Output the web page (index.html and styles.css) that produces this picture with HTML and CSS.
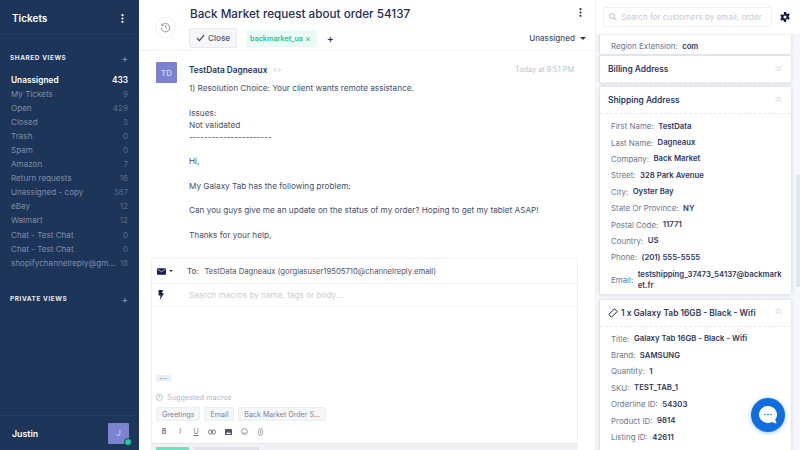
FILE: index.html
```html
<!DOCTYPE html>
<html lang="en">
<head>
<meta charset="utf-8">
<title>Tickets</title>
<link rel="stylesheet" href="styles.css">
</head>
<body>
<div class="app">
  <aside class="side">
    <div class="side-head"><span class="side-title">Tickets</span>
      <svg class="kebab" width="3" height="9" viewBox="0 0 3 9"><circle cx="1.5" cy="1.2" r="1.1"/><circle cx="1.5" cy="4.5" r="1.1"/><circle cx="1.5" cy="7.8" r="1.1"/></svg>
    </div>
    <div class="sec-head first"><span>SHARED VIEWS</span><span class="plus">+</span></div>
    <ul class="views">
      <li class="active"><span>Unassigned</span><span>433</span></li>
      <li><span>My Tickets</span><span class="n">9</span></li>
      <li><span>Open</span><span class="n">429</span></li>
      <li><span>Closed</span><span class="n">3</span></li>
      <li><span>Trash</span><span class="n">0</span></li>
      <li><span>Spam</span><span class="n">0</span></li>
      <li><span>Amazon</span><span class="n">7</span></li>
      <li><span>Return requests</span><span class="n">16</span></li>
      <li><span>Unassigned - copy</span><span class="n">387</span></li>
      <li><span>eBay</span><span class="n">12</span></li>
      <li><span>Walmart</span><span class="n">12</span></li>
      <li><span>Chat - Test Chat</span><span class="n">0</span></li>
      <li><span>Chat - Test Chat</span><span class="n">0</span></li>
      <li><span class="trunc">shopifychannelreply@gm...</span><span class="n">18</span></li>
    </ul>
    <div class="sec-head"><span>PRIVATE VIEWS</span><span class="plus">+</span></div>
    <div class="side-foot"><span class="user">Justin</span>
      <span class="avatar-j">J<i class="dot"></i></span>
    </div>
  </aside>

  <main class="main">
    <header class="head">
      <div class="hist"><svg width="11" height="11" viewBox="0 0 12 12" fill="none" stroke="#8a8fa3" stroke-width="1"><path d="M2.2 3.6A4.6 4.6 0 1 1 1.4 6"/><path d="M2 1.6v2.2h2.2"/><path d="M6 3.6V6l1.6 1"/></svg></div>
      <div class="head-body">
        <div class="head-top"><h1>Back Market request about order 54137</h1>
          <svg class="kebab dark" width="3" height="9" viewBox="0 0 3 9"><circle cx="1.5" cy="1.2" r="1.1"/><circle cx="1.5" cy="4.5" r="1.1"/><circle cx="1.5" cy="7.8" r="1.1"/></svg>
        </div>
        <div class="head-row">
          <button class="close"><svg width="9" height="8" viewBox="0 0 9 8" fill="none" stroke="#2f3a5a" stroke-width="1.1"><path d="M1 4.2l2.4 2.4L8 1.2"/></svg>Close</button>
          <span class="tag">backmarket_us <b>×</b></span>
          <span class="add">+</span>
          <span class="assign">Unassigned<i class="caret"></i></span>
        </div>
      </div>
    </header>
    <section class="msg">
      <div class="avatar">TD</div>
      <div class="msg-body">
        <div class="msg-top"><span class="from">TestData Dagneaux</span><span class="code">&lt;&gt;</span><span class="time">Today at 9:51 PM</span></div>
        <p>1) Resolution Choice: Your client wants remote assistance.</p>
        <p class="gap">Issues:<br>Not validated<br>----------------------</p>
        <p class="gap">Hi,</p>
        <p class="gap">My Galaxy Tab has the following problem:</p>
        <p class="gap">Can you guys give me an update on the status of my order? Hoping to get my tablet ASAP!</p>
        <p class="gap">Thanks for your help,</p>
      </div>
    </section>
    <section class="reply">
      <div class="reply-row to">
        <svg class="mail" width="9" height="7" viewBox="0 0 11 8"><rect width="11" height="8" rx="1" fill="#141f4a"/><path d="M.8 1.2l4.700 3.200 4.700-3.200" fill="none" stroke="#fff" stroke-width=".8"/></svg><i class="caret small"></i>
        <span class="to-l">To:</span><span>TestData Dagneaux (gorgiasuser19505710@channelreply.email)</span>
      </div>
      <div class="reply-row macro">
        <svg class="bolt" width="6" height="10" viewBox="0 0 6 10"><path d="M.6 0h4.600L3.800 3.200H6L1.800 10l.8-4.600H.6z" fill="#141f4a"/></svg>
        <span>Search macros by name, tags or body...</span>
      </div>
      <div class="editor">
        <span class="more">•••</span>
        <div class="sugg"><svg width="7" height="7" viewBox="0 0 8 8" fill="none" stroke="#9aa0b2" stroke-width=".8"><circle cx="4" cy="4" r="3.400"/><path d="M4 2v2.400"/></svg>Suggested macros</div>
        <div class="chips"><span>Greetings</span><span>Email</span><span>Back Market Order S...</span></div>
        <div class="tools">
          <span class="tool"><b>B</b></span><span class="tool"><em>I</em></span><span class="tool"><u>U</u></span>
          <span class="tool"><svg width="8" height="6" viewBox="0 0 8 6" fill="none" stroke="#6d7488" stroke-width=".9"><rect x=".5" y="1" width="4" height="4" rx="2"/><rect x="3.500" y="1" width="4" height="4" rx="2"/></svg></span>
          <span class="tool"><svg width="7" height="6" viewBox="0 0 7 6"><rect width="7" height="6" rx=".6" fill="#4f5873"/><path d="M1 5l1.800-2 1.200 1.200 1-.8L6 5z" fill="#fff"/></svg></span>
          <span class="tool"><svg width="7" height="7" viewBox="0 0 8 8" fill="none" stroke="#6d7488" stroke-width=".8"><circle cx="4" cy="4" r="3.400"/><path d="M2.400 5c1 1 2.200 1 3.200 0M2.800 3h.4M4.800 3h.4"/></svg></span>
          <span class="tool"><svg width="5" height="8" viewBox="0 0 5 8" fill="none" stroke="#8a90a2" stroke-width=".8"><rect x=".6" y=".5" width="3.800" height="7" rx="1.900"/><path d="M2.500 2v3.600"/></svg></span>
        </div>
      </div>
      <div class="send"><span class="send-a"></span><span class="send-b"></span></div>
    </section>
  </main>

  <aside class="right">
    <div class="search-bar">
      <label class="search"><svg width="8" height="8" viewBox="0 0 8 8" fill="none" stroke="#b9bccb" stroke-width="1"><circle cx="3.200" cy="3.200" r="2.500"/><path d="M5 5l2.500 2.500"/></svg><span>Search for customers by email, order</span></label>
      <svg class="gear" width="10" height="10" viewBox="0 0 10 10"><path d="M4 0h2l.3 1.400 1 .5L8.600 1.200l1.200 1.600-1 1v1.400l1 1-1.200 1.600-1.300-.7-1 .5L6 10H4l-.3-1.400-1-.5-1.300.7L.2 7.200l1-1V4.800l-1-1L1.400 2.200l1.300.7 1-.5z" fill="#141f4a"/><circle cx="5" cy="5" r="1.500" fill="#fff"/></svg>
    </div>
    <div class="scroll">
      <div class="card top">
        <div class="f"><span>Region Extension:</span><b>com</b></div>
      </div>
      <div class="card billing">
        <div class="c-head"><span>Billing Address</span><svg class="chev" width="7" height="7" viewBox="0 0 7 7" fill="none" stroke="#c3c6d4" stroke-width=".8"><path d="M.5 .8l3 2.400 3-2.400M.5 3.600l3 2.400 3-2.400"/></svg></div>
      </div>
      <div class="card shadow">
        <div class="c-head"><span>Shipping Address</span><svg class="chev" width="7" height="7" viewBox="0 0 7 7" fill="none" stroke="#c3c6d4" stroke-width=".8"><path d="M.5 3.200l3-2.400 3 2.400M.5 6l3-2.400 3 2.400"/></svg></div>
        <div class="fields">
          <div class="f"><span>First Name:</span><b>TestData</b></div>
          <div class="f"><span>Last Name:</span><b>Dagneaux</b></div>
          <div class="f"><span>Company:</span><b>Back Market</b></div>
          <div class="f"><span>Street:</span><b>328 Park Avenue</b></div>
          <div class="f"><span>City:</span><b>Oyster Bay</b></div>
          <div class="f"><span>State Or Province:</span><b>NY</b></div>
          <div class="f"><span>Postal Code:</span><b>11771</b></div>
          <div class="f"><span>Country:</span><b>US</b></div>
          <div class="f"><span>Phone:</span><b>(201) 555-5555</b></div>
          <div class="f email"><span>Email:</span><b>testshipping_37473_54137@backmark<br>et.fr</b></div>
        </div>
      </div>
      <div class="card last">
        <div class="c-head prod"><svg width="10" height="10" viewBox="0 0 10 10" fill="none" stroke="#141f4a" stroke-width="1"><path d="M6.500 .8l2.700 2.700-5.700 5.700L.8 6.500z"/><path d="M6 3h.1M7 4h.1"/></svg><span>1 x Galaxy Tab 16GB - Black - Wifi</span><svg class="chev" width="7" height="7" viewBox="0 0 7 7" fill="none" stroke="#c3c6d4" stroke-width=".8"><path d="M.5 3.200l3-2.400 3 2.400M.5 6l3-2.400 3 2.400"/></svg></div>
        <div class="fields">
          <div class="f"><span>Title:</span><b>Galaxy Tab 16GB - Black - Wifi</b></div>
          <div class="f"><span>Brand:</span><b>SAMSUNG</b></div>
          <div class="f"><span>Quantity:</span><b>1</b></div>
          <div class="f"><span>SKU:</span><b>TEST_TAB_1</b></div>
          <div class="f"><span>Orderline ID:</span><b>54303</b></div>
          <div class="f"><span>Product ID:</span><b>9814</b></div>
          <div class="f"><span>Listing ID:</span><b>42611</b></div>
        </div>
      </div>
    </div>
    <div class="sbar"></div>
    <div class="fab"><svg width="20" height="18" viewBox="0 0 20 18"><path d="M10 0c5 0 9 3.800 9 8.500 0 1.900-.7 3.600-1.800 5l1.300 3.300c.2.500-.2.800-.7.600l-3.800-1.300A9.500 9.500 0 0 1 10 17c-5 0-9-3.800-9-8.500S5 0 10 0z" fill="#fff"/><circle cx="7" cy="8.500" r=".8" fill="#0f6fe0"/><circle cx="10" cy="8.500" r=".8" fill="#0f6fe0"/><circle cx="13" cy="8.500" r=".8" fill="#0f6fe0"/></svg></div>
  </aside>
</div>
</body>
</html>
```
FILE: styles.css
```css
* { box-sizing: border-box; }
html, body { margin: 0; height: 100%; overflow: hidden; }
body { font-family: Inter, "Liberation Sans", sans-serif; font-size: 8.2px; color: #3b4468; background: #fff; }
.app { display: flex; width: 800px; height: 450px; overflow: hidden; }

/* sidebar */
.side { width: 139px; flex: none; background: #1c3558; color: #fff; display: flex; flex-direction: column; }
.side-head { height: 35px; display: flex; align-items: center; justify-content: space-between; padding: 2px 15px 0 12px; border-bottom: 1px solid #223c60; font-size: 10px; font-weight: 600; }
.side-title { color: #fff; }
.kebab { fill: #fff; }
.kebab.dark { fill: #2b3558; margin-top: -3px; }
.sec-head { display: flex; justify-content: space-between; align-items: center; padding: 0 11px 0 10px; font-size: 6.4px; font-weight: 700; letter-spacing: .6px; color: #e8ecf3; height: 12px; margin-top: 23.5px; }
.sec-head.first { margin-top: 17px; }
.plus { font-size: 10px; font-weight: 400; color: #8d9ab1; letter-spacing: 0; }
.views { list-style: none; margin: 8.5px 0 0; padding: 0 11px; }
.views li { height: 14.1px; display: flex; align-items: center; justify-content: space-between; color: #7e8ea7; font-size: 8.1px; white-space: nowrap; }
.views li.active { color: #fff; font-weight: 600; font-size: 8.3px; }
.views .n { color: #566c8c; }
.side-foot { margin-top: auto; height: 35px; display: flex; align-items: center; justify-content: space-between; padding: 0 10px 0 12px; border-top: 1px solid #223c60; font-size: 8.8px; font-weight: 600; }
.user { color: #fff; }
.avatar-j { position: relative; width: 21px; height: 21px; background: #7b82d0; color: #c9cbee; font-size: 8px; font-weight: 500; display: flex; align-items: center; justify-content: center; border-radius: 1px; }
.dot { position: absolute; right: -3px; bottom: -2.5px; width: 8px; height: 8px; border-radius: 50%; background: #1fd29a; border: 1px solid #1c3558; }

/* main */
.main { width: 456px; flex: none; display: flex; flex-direction: column; overflow: hidden; }
.head { height: 51px; flex: none; display: flex; padding: 0 9px 0 16px; border-bottom: 1px solid #f1f2f6; }
.hist { width: 21px; height: 21px; margin-top: 17px; border: 1px solid #eff0f4; border-radius: 50%; display: flex; align-items: center; justify-content: center; flex: none; }
.head-body { flex: 1; margin-left: 13px; min-width: 0; }
.head-top { display: flex; justify-content: space-between; align-items: center; height: 28px; padding-right: 4px; }
h1 { margin: 0; font-size: 11.7px; font-weight: 500; color: #242c55; padding-left: 1px; }
.head-row { display: flex; align-items: center; height: 20px; }
.close { height: 20px; width: 48px; display: flex; align-items: center; justify-content: center; gap: 3px; background: #f5f6f8; border: 1px solid #e6e8ee; border-radius: 2px; font: 500 8.2px Inter, sans-serif; color: #4d566f; padding: 0; }
.tag { margin-left: 9px; height: 17px; padding: 0 6px 0 4px; display: flex; align-items: center; gap: 2px; background: #e9fbf4; color: #2bc48a; font-size: 7.2px; font-weight: 600; border-radius: 2px; }
.tag b { font-weight: 400; font-size: 9px; }
.add { margin-left: 10px; font-size: 10px; color: #2b3558; font-weight: 600; }
.assign { margin-left: auto; display: flex; align-items: center; gap: 5px; color: #4a536f; font-size: 8.1px; font-weight: 500; }
.caret { width: 0; height: 0; border: 3px solid transparent; border-top-color: #2b3558; border-bottom: 0; display: inline-block; }
.msg { display: flex; padding: 11px 21px 0 17px; height: 207px; flex: none; }
.avatar { width: 21px; height: 21px; background: #7b82d0; color: #cdd0f1; font-size: 8px; font-weight: 600; display: flex; align-items: center; justify-content: center; border-radius: 1px; flex: none; }
.msg-body { margin-left: 12px; flex: 1; line-height: 12px; color: #464e68; }
.msg-top { display: flex; align-items: center; height: 16px; margin-bottom: 4px; }
.from { font-weight: 600; color: #2b3558; font-size: 8.3px; }
.code { margin-left: 5px; color: #b8bccb; font-size: 7px; }
.time { margin-left: auto; color: #bcc0d0; font-size: 7.3px; }
.msg-body p { margin: 0; font-size: 8.2px; }
.msg-body p.gap { margin-top: 12.5px; }
.reply { margin: 0 17px 0 12px; border: 1px solid #f1f2f5; border-bottom: 0; border-radius: 2px 2px 0 0; flex: 1; display: flex; flex-direction: column; }
.reply-row { display: flex; align-items: center; padding-left: 5px; border-bottom: 1px solid #f1f2f5; flex: none; }
.to { height: 25px; color: #4a536f; font-size: 7.7px; }
.mail { margin-right: 3px; }
.caret.small { border-width: 2.5px; border-bottom: 0; }
.to-l { margin: 0 6px 0 14px; font-weight: 500; }
.macro { height: 23px; color: #c9ccd9; font-size: 8.2px; padding-left: 6px; }
.bolt { margin-right: 25px; }
.editor { flex: 1; padding: 68px 0 0 4px; display: flex; flex-direction: column; }
.more { width: 15px; height: 6px; background: #e9eefa; color: #8893ad; font-size: 4px; letter-spacing: .3px; display: flex; align-items: center; justify-content: center; border-radius: 1px; }
.sugg { margin-top: 11px; display: flex; align-items: center; gap: 4px; color: #b3b7c6; font-size: 7.3px; height: 10px; }
.chips { display: flex; gap: 4px; margin-top: 5px; }
.chips span { height: 14px; padding: 0 5px; display: flex; align-items: center; background: #f5f6f8; border: 1px solid #eceef2; border-radius: 2px; color: #7d8499; font-size: 7.1px; }
.tools { display: flex; align-items: center; height: 11px; margin: 5px 0 0 0; font-size: 7px; color: #6d7488; }
.tool { width: 16px; display: flex; justify-content: center; }
.send { margin-top: auto; height: 7px; background: #f1f2f6; border-top: 1px solid #e5e7ed; display: flex; gap: 5px; padding: 3px 0 0 4px; flex: none; }
.send-a { width: 33px; height: 4px; background: #6fe3bd; border-radius: 1px 1px 0 0; }
.send-b { width: 65px; height: 4px; background: #e2e4ea; border-radius: 1px 1px 0 0; }

/* right */
.right { position: relative; flex: 1; min-width: 0; background: #f6f7fa; display: flex; flex-direction: column; border-left: 1px solid #f0f1f5; overflow: hidden; }
.search-bar { height: 35px; flex: none; background: #fff; border-bottom: 1px solid #eceef3; display: flex; align-items: center; padding: 0 8px 0 7px; gap: 8px; }
.search { width: 169px; height: 20px; border: 1px solid #f0f1f5; border-radius: 2px; display: flex; align-items: center; gap: 4px; padding-left: 5px; color: #c7cad8; font-size: 8.05px; white-space: nowrap; overflow: hidden; }
.search span { overflow: hidden; }
.gear { flex: none; }
.scroll { padding: 0 8px 0 4px; flex: 1; overflow: hidden; }
.card { width: 191px; background: #fff; box-shadow: -1px 0 3px #d5d8e5, 1px 0 3px #e2e4ee; margin-bottom: 2px; color: #2f3862; }
.card.shadow { box-shadow: 0 0 4px #c6c9dd; margin-bottom: 6px; }
.card.top { height: 19px; padding: 3px 0 0 11px; }
.card.billing { margin-bottom: 4px; }
.card.last { padding-bottom: 24px; }
.c-head { height: 27px; display: flex; align-items: center; justify-content: space-between; padding: 0 9px 0 8px; font-size: 8.4px; font-weight: 600; color: #2f3862; border-bottom: 1px dashed #e8eaf0; }
.chev { flex: none; margin-top: -2px; }
.c-head.prod { justify-content: flex-start; gap: 3px; }
.prod .chev { margin-left: auto; }
.fields { padding: 4px 8px 0 11px; }
.f { display: flex; align-items: center; gap: 4.5px; height: 16.4px; font-size: 7.9px; white-space: nowrap; }
.f span { color: #6d7490; }
.f b { font-weight: 600; color: #2f3862; font-size: 7.75px; line-height: 11px; }
.f.email { height: 25px; margin-top: 3px; padding-bottom: 3px; }
.sbar { position: absolute; right: 0; top: 175px; width: 4px; height: 112px; background: #e0e5f4; }
.fab { position: absolute; right: 15px; bottom: 18px; width: 34px; height: 34px; border-radius: 50%; background: #0f6fe0; box-shadow: 0 1px 4px rgba(15,111,224,.4); display: flex; align-items: center; justify-content: center; }
```
